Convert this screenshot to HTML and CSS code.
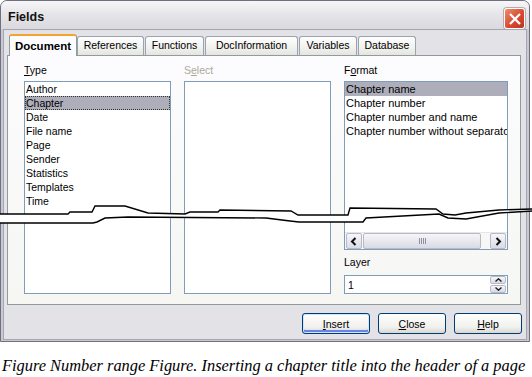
FILE: index.html
```html
<!DOCTYPE html>
<html lang="en">
<head>
  <meta charset="UTF-8" />
  <title>Fields</title>
  <link rel="stylesheet" href="styles.css">
</head>
<body>

<div class="window">
  <div class="titlebar">
    <span class="title">Fields</span>
    <span class="close-btn">
      <svg width="12" height="12" viewBox="0 0 12 12"><path d="M1.8 1.8 L10.2 10.2 M10.2 1.8 L1.8 10.2" stroke="#fff" stroke-width="2.3" stroke-linecap="square"/></svg>
    </span>
  </div>

  <div class="content">
    <div class="tabs">
      <div class="tab active">Document</div>
      <div class="tab tab-refs">References</div>
      <div class="tab tab-func">Functions</div>
      <div class="tab tab-info">DocInformation</div>
      <div class="tab tab-vars">Variables</div>
      <div class="tab tab-db">Database</div>
    </div>

    <div class="panel">
      <div class="field col-type">
        <div class="label"><u>T</u>ype</div>
        <ul class="listbox tall">
          <li>Author</li>
          <li class="selected focused">Chapter</li>
          <li>Date</li>
          <li>File name</li>
          <li>Page</li>
          <li>Sender</li>
          <li>Statistics</li>
          <li>Templates</li>
          <li>Time</li>
        </ul>
      </div>

      <div class="field col-select">
        <div class="label disabled">S<u>e</u>lect</div>
        <div class="listbox tall"></div>
      </div>

      <div class="field col-format">
        <div class="label">F<u>o</u>rmat</div>
        <div class="listbox short">
          <ul class="rows">
            <li class="selected">Chapter name</li>
            <li>Chapter number</li>
            <li>Chapter number and name</li>
            <li>Chapter number without separator</li>
          </ul>
          <div class="hscroll">
            <span class="sb-btn">
              <svg width="8" height="9" viewBox="0 0 8 9"><path d="M5.5 1 L2 4.5 L5.5 8" fill="none" stroke="#111" stroke-width="2"/></svg>
            </span>
            <span class="sb-thumb"><span class="grip"></span></span>
            <span class="sb-track"></span>
            <span class="sb-btn">
              <svg width="8" height="9" viewBox="0 0 8 9"><path d="M2.5 1 L6 4.5 L2.5 8" fill="none" stroke="#111" stroke-width="2"/></svg>
            </span>
          </div>
        </div>
        <div class="label layer-label">Layer</div>
        <div class="spin">
          <span class="spin-value">1</span>
          <span class="spin-btns">
            <span class="spin-btn"><svg width="7" height="4" viewBox="0 0 7 4"><path d="M0.5 3.5 L3.5 0.8 L6.5 3.5" fill="none" stroke="#222" stroke-width="1.4"/></svg></span>
            <span class="spin-btn"><svg width="7" height="4" viewBox="0 0 7 4"><path d="M0.5 0.5 L3.5 3.2 L6.5 0.5" fill="none" stroke="#222" stroke-width="1.4"/></svg></span>
          </span>
        </div>
      </div>
    </div>

    <div class="buttons">
      <button class="btn default"><u>I</u>nsert</button>
      <button class="btn"><u>C</u>lose</button>
      <button class="btn"><u>H</u>elp</button>
    </div>
  </div>
</div>

<p class="figure-caption">Figure Number range Figure. Inserting a chapter title into the header of a page</p>

<!-- torn-paper break drawn over the dialog -->
<svg class="tear" width="532" height="377" viewBox="0 0 532 377">
  <path fill="#fff" d="M0 214 L68 214 L70 212 L92 212 L95 206 L125 206 L148 213 L185 214 L190 212 L218 212 L220 210 L291 211 L298 215 L348 215 L350 208 L436 209 L443 214 L455 215 L466 213 L499 210 L532 209
    L532 211 L499 213 L466 219 L448 218 L439 214 L366 218 L363 222 L299 222 L290 221 L266 218 L128 217 L105 218 L97 222 L93 223 L0 223 Z"/>
  <polyline fill="none" stroke="#000" stroke-width="1.4" points="0,214 68,214 70,212 92,212 95,206 125,206 148,213 185,214 190,212 218,212 220,210 291,211 298,215 348,215 350,208 436,209 443,214 455,215 466,213 499,210 532,209"/>
  <polyline fill="none" stroke="#000" stroke-width="1.4" points="0,223 93,223 97,222 105,218 128,217 266,218 290,221 299,222 363,222 366,218 439,214 448,218 466,219 499,213 532,211"/>
</svg>

</body>
</html>
```

FILE: styles.css
```css
body {
  margin: 0;
  position: relative;
  width: 532px;
  height: 377px;
  overflow: hidden;
  background: #ffffff;
  font-family: "Liberation Sans", Arial, sans-serif;
  font-size: 10.5px;
  color: #000;
}

.window {
  width: 528px;
  height: 340px;
  border: 1px solid #6f6f7e;
  border-radius: 7px 7px 0 0;
  background: #c9c9d3;
  display: flex;
  flex-direction: column;
}

.titlebar {
  height: 28px;
  flex: none;
  display: flex;
  align-items: center;
  justify-content: space-between;
  padding: 0 4px 0 7px;
  border-radius: 6px 6px 0 0;
  background: linear-gradient(#f7f7f9, #e6e6ea 45%, #d9d9de);
}
.title {
  font-weight: bold;
  font-size: 12.5px;
  color: #111;
  margin-top: 3px;
}
.close-btn {
  width: 19px;
  height: 19px;
  margin-top: 7px;
  border: 1px solid #fff;
  border-radius: 3px;
  background: linear-gradient(135deg, #ec8e70, #d94a30 55%, #bb3420);
  display: flex;
  align-items: center;
  justify-content: center;
  box-shadow: 0 0 0 1px #b9a9a9;
}

.content {
  flex: 1;
  margin: 0 2px 2px;
  border: 1px solid #a6a6b2;
  background: #e3e2e7;
  padding: 0 4px 5px 3px;
  display: flex;
  flex-direction: column;
}

/* tabs */
.tabs {
  height: 25px;
  flex: none;
  display: flex;
  align-items: flex-end;
  padding-left: 4px;
}
.tab {
  height: 18px;
  line-height: 17px;
  text-align: center;
  border: 1px solid #9aa3b0;
  border-bottom: none;
  border-radius: 3px 3px 0 0;
  background: linear-gradient(#fefefe, #f1f1ee 60%, #e4e4e0);
  margin-right: 1px;
  box-sizing: content-box;
}
.tab.active {
  height: 20px;
  width: 66px;
  line-height: 21px;
  font-weight: bold;
  font-size: 11.5px;
  margin-left: -2px;
  margin-right: 0;
  margin-bottom: -1px;
  background: #fcfcfe;
  border-top: 2px solid #f1a52f;
  border-color: #f1a52f #919b9c #919b9c;
  position: relative;
  z-index: 1;
}
.tab-refs { width: 65px; }
.tab-func { width: 57px; }
.tab-info { width: 91px; }
.tab-vars { width: 56px; }
.tab-db { width: 56px; }

/* tab page */
.panel {
  flex: none;
  margin-right: 1px;
  height: 240px;
  border: 1px solid #919b9c;
  background: linear-gradient(#fcfcfe, #f6f6f3);
  display: flex;
  gap: 13px;
  padding: 8px 12px 0 16px;
  box-sizing: content-box;
}
.field {
  display: flex;
  flex-direction: column;
}
.col-type, .col-select { width: 147px; }
.col-format { width: 164px; }

.label {
  height: 13px;
  line-height: 13px;
  margin-bottom: 4px;
}
.label.disabled { color: #aca899; }
.layer-label { margin: 6px 0 6px; }

.listbox {
  margin: 0;
  padding: 0;
  list-style: none;
  border: 1px solid #7f9db9;
  background: #fff;
  box-sizing: border-box;
  overflow: hidden;
}
.listbox.tall { height: 213px; }
.listbox.short {
  height: 169px;
  display: flex;
  flex-direction: column;
}
.listbox li, .rows li {
  height: 14px;
  line-height: 14px;
  padding-left: 1px;
  white-space: nowrap;
}
.rows {
  flex: 1;
  margin: 0;
  padding: 0;
  list-style: none;
  overflow: hidden;
  font-size: 11px;
}
.selected { background: #aeaebb; }
.focused {
  outline: 1px dotted #333;
  outline-offset: -1px;
}

/* horizontal scrollbar */
.hscroll {
  height: 16px;
  display: flex;
  background: #f7f7f5;
  border-top: 1px solid #e4e4ea;
}
.sb-btn {
  width: 14px;
  margin: 0 1px;
  border: 1px solid #b7b9c8;
  border-radius: 2px;
  background: linear-gradient(#f7f7fa, #dadbe4);
  display: flex;
  align-items: center;
  justify-content: center;
}
.sb-thumb {
  flex: 1;
  border: 1px solid #b7b9c8;
  border-radius: 2px;
  background: linear-gradient(#f6f6f9, #d9dae3);
  display: flex;
  align-items: center;
  justify-content: center;
}
.grip {
  width: 7px;
  height: 6px;
  background: repeating-linear-gradient(90deg, #8d8fa2 0 1px, transparent 1px 2px);
}
.sb-track { width: 8px; }

/* spin field */
.spin {
  height: 19px;
  border: 1px solid #7f9db9;
  background: #fff;
  box-sizing: border-box;
  display: flex;
  align-items: center;
  justify-content: space-between;
  padding: 0 1px 0 3px;
}
.spin-btns {
  display: flex;
  flex-direction: column;
  gap: 1px;
}
.spin-btn {
  width: 14px;
  height: 6px;
  border: 1px solid #b7b9c8;
  border-radius: 2px;
  background: linear-gradient(#f7f7fa, #d8d9e2);
  display: flex;
  align-items: center;
  justify-content: center;
}

/* dialog buttons */
.buttons {
  margin-top: 8px;
  display: flex;
  justify-content: flex-end;
  gap: 8px;
}
.btn {
  width: 68px;
  height: 21px;
  padding: 0;
  font-family: inherit;
  font-size: 10.5px;
  color: #000;
  border: 1px solid #003c74;
  border-radius: 3px;
  background: linear-gradient(#ffffff, #f0f0ec 70%, #d8d7d0);
}
.btn.default {
  box-shadow: inset 0 0 0 1px #cee7ff, inset 0 -2px 0 1px #6982ee;
}

.figure-caption {
  margin: 14px 0 0 2px;
  font-family: "Liberation Serif", "Times New Roman", serif;
  font-style: italic;
  font-size: 16.4px;
  white-space: nowrap;
}

.tear {
  position: absolute;
  top: 0;
  left: 0;
  pointer-events: none;
}
```
